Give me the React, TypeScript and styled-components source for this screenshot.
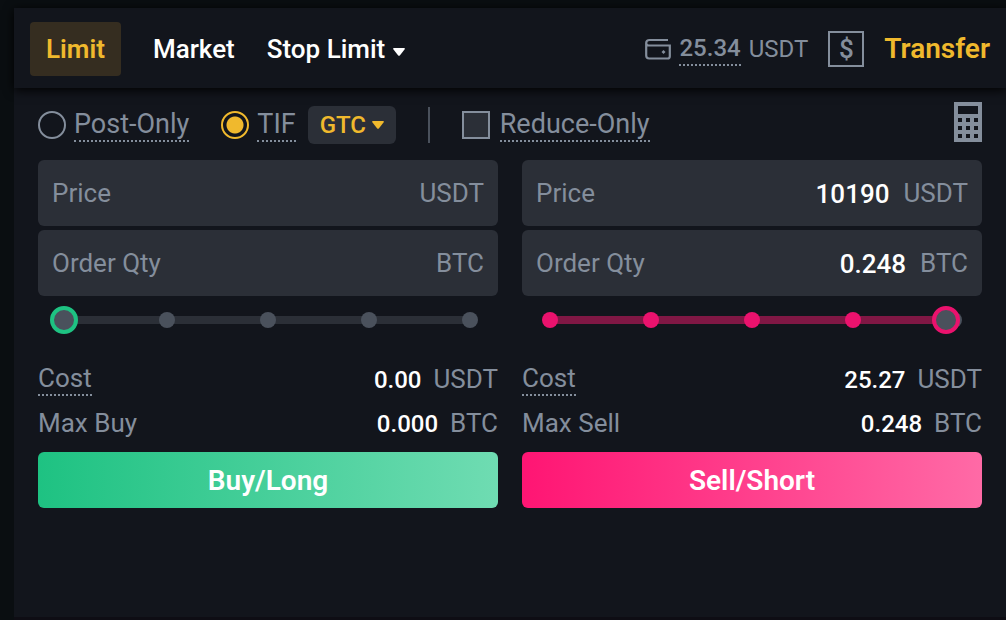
import React, { useId, useState } from "react";
import styled, { createGlobalStyle } from "styled-components";

const color = {
  page: "#0a0e11",
  panel: "#12151c",
  field: "#2b2f37",
  muted: "#848e9c",
  dot: "#4a515c",
  yellow: "#f0b92d",
  green: "#1ec282",
  greenLight: "#6fdcb2",
  pink: "#ff1573",
  pinkLight: "#ff6aa6",
  pinkDot: "#ea126d",
  pinkTrack: "#801744",
};

const GlobalStyle = createGlobalStyle`
  *, *::before, *::after { box-sizing: border-box; }
  body {
    margin: 0;
    background: ${color.page};
    color: ${color.muted};
    font-family: Roboto, "Liberation Sans", sans-serif;
    font-size: 26px;
    line-height: 32px;
  }
  button, input, select { margin: 0; font: inherit; color: inherit; }
`;

const Page = styled.main`
  min-height: 100vh;
  padding: 8px 0 0 14px;
  display: flex;
`;

const Panel = styled.section`
  flex: 1;
  min-width: 0;
  background: ${color.panel};
  border-bottom: 3px solid #0e0d14;
`;

const Header = styled.header`
  display: flex;
  align-items: center;
  justify-content: space-between;
  height: 80px;
  padding: 2px 16px 0;
  background: ${color.panel};
  box-shadow: 0 2px 10px #000;
`;

const Tabs = styled.nav`
  display: flex;
  align-items: center;
  gap: 32px;
`;

const Tab = styled.button<{ $active?: boolean }>`
  display: flex;
  align-items: center;
  gap: 8px;
  height: 54px;
  padding: 0 ${(p) => (p.$active ? 16 : 0)}px;
  border: 0;
  border-radius: 4px;
  background: ${(p) => (p.$active ? "#352d20" : "transparent")};
  color: ${(p) => (p.$active ? color.yellow : "#fff")};
  font-weight: ${(p) => (p.$active ? 600 : 500)};
  white-space: nowrap;
  > svg { margin-top: 6px; }
`;

const Account = styled.div`
  display: flex;
  align-items: center;
  gap: 20px;
`;

const Balance = styled.div`
  display: flex;
  align-items: center;
  gap: 8px;
  font-size: 24px;
`;

const Hint = styled.span`
  border-bottom: 2px dotted ${color.muted};
`;

const BalanceHint = styled(Hint)`
  font-weight: 500;
`;

const UnitButton = styled.button`
  width: 36px;
  height: 36px;
  padding: 0;
  border: 2px solid ${color.muted};
  background: transparent;
  font-weight: 500;
  line-height: 28px;
`;

const TransferLink = styled.a`
  color: ${color.yellow};
  font-size: 28px;
  font-weight: 600;
  text-decoration: none;
`;

const Body = styled.div`
  padding: 0 24px;
`;

const Options = styled.div`
  display: flex;
  align-items: center;
  height: 72px;
  padding-top: 2px;
  font-size: 27px;
`;

const Option = styled.label`
  display: flex;
  align-items: center;
  gap: 8px;
  margin-right: 32px;
  white-space: nowrap;
`;

const TifOption = styled(Option)`
  margin-right: 12px;
`;

const CheckOption = styled(Option)`
  gap: 10px;
`;

const Radio = styled.input`
  appearance: none;
  width: 28px;
  height: 28px;
  border: 2px solid ${color.muted};
  border-radius: 50%;
  &:checked {
    border-color: ${color.yellow};
    background: radial-gradient(circle, ${color.yellow} 8px, transparent 9px);
  }
`;

const Checkbox = styled.input`
  appearance: none;
  width: 28px;
  height: 28px;
  border: 2px solid ${color.muted};
  background: ${color.field};
  &:checked { background: ${color.yellow}; }
`;

const SelectBox = styled.div`
  display: grid;
  align-items: center;
  width: 88px;
  height: 38px;
  border-radius: 6px;
  background: ${color.field};
  color: ${color.yellow};
  > * { grid-area: 1 / 1; }
  > svg { justify-self: end; margin-right: 12px; pointer-events: none; }
`;

const Select = styled.select`
  appearance: none;
  width: 100%;
  height: 38px;
  padding: 0 12px;
  border: 0;
  background: transparent;
  font-size: 24px;
  font-weight: 500;
`;

const Divider = styled.span`
  width: 2px;
  height: 36px;
  margin: 0 32px;
  background: #4a515c;
`;

const IconButton = styled.button`
  display: flex;
  align-self: flex-start;
  margin: 12px 0 0 auto;
  padding: 0;
  border: 0;
  background: transparent;
`;

const Sides = styled.div`
  display: grid;
  grid-template-columns: 1fr 1fr;
  gap: 24px;
`;

const Side = styled.form`
  display: flex;
  flex-direction: column;
  min-width: 0;
`;

const Field = styled.label`
  display: flex;
  align-items: center;
  height: 66px;
  padding: 0 14px;
  border-radius: 6px;
  background: ${color.field};
  white-space: nowrap;
  & + & { margin-top: 4px; }
`;

const FieldInput = styled.input`
  flex: 1;
  min-width: 0;
  margin-right: 14px;
  padding: 2px 0 0;
  border: 0;
  outline: 0;
  background: transparent;
  color: #fff;
  font-weight: 500;
  text-align: right;
`;

const Slider = styled.div`
  display: grid;
  align-items: center;
  height: 48px;
  padding: 0 20px;
  > * { grid-area: 1 / 1; }
`;

const Marks = styled.div<{ $filled: boolean }>`
  display: flex;
  justify-content: space-between;
  background: linear-gradient(
    transparent 4px,
    ${(p) => (p.$filled ? color.pinkTrack : color.field)} 4px 12px,
    transparent 12px
  ) no-repeat 8px 0 / calc(100% - 16px) 16px;
`;

const Mark = styled.span<{ $on: boolean }>`
  width: 16px;
  height: 16px;
  border-radius: 50%;
  background: ${(p) => (p.$on ? color.pinkDot : color.dot)};
`;

const Range = styled.input<{ $ring: string }>`
  appearance: none;
  height: 28px;
  margin: 0 2px 0 -8px;
  background: transparent;
  z-index: 1;
  &::-webkit-slider-thumb {
    appearance: none;
    width: 28px;
    height: 28px;
    border: 4px solid ${(p) => p.$ring};
    border-radius: 50%;
    background: ${color.dot};
  }
`;

const Summary = styled.dl`
  margin: 13px 0 7px;
`;

const SummaryRow = styled.div`
  display: flex;
  align-items: center;
  justify-content: space-between;
  height: 44px;
`;

const Term = styled.dt`
  display: flex;
`;

const Amount = styled.dd`
  display: flex;
  align-items: center;
  gap: 12px;
  margin: 0;
`;

const Value = styled.span`
  padding-top: 2px;
  color: #fff;
  font-size: 24px;
  font-weight: 500;
`;

const Submit = styled.button<{ $from: string; $to: string }>`
  height: 56px;
  padding: 2px 0 0;
  border: 0;
  border-radius: 6px;
  background: linear-gradient(90deg, ${(p) => p.$from}, ${(p) => p.$to});
  color: #fff;
  font-size: 28px;
  font-weight: 600;
`;

const Caret = () => (
  <svg width="12" height="8" viewBox="0 0 12 8" fill="currentColor" aria-hidden="true">
    <path d="M1 0H11Q12.500 0 11.500 1.500L7 7.300Q6 8.400 5 7.300L.5 1.500Q-.5 0 1 0Z" />
  </svg>
);

const WalletIcon = () => (
  <svg width="26" height="22" viewBox="0 0 26 22" fill="none" stroke="currentColor" strokeWidth="2.200" aria-hidden="true">
    <path d="M23 2H4.500Q1.200 2 1.200 5v12.500q0 3 3 3H22.500q2.300 0 2.300-2.300V7.500H3.500Q1.200 7.300 1.200 5" />
    <path d="M18.500 12l2 2-2 2-2-2Z" fill="currentColor" stroke="none" />
  </svg>
);

const CalculatorIcon = () => (
  <svg width="28" height="40" viewBox="0 0 28 40" aria-hidden="true">
    <path fill="currentColor" d="M0 0h28v40H0Z" />
    <path fill={color.panel} d="M4 4h20v8H4Z" />
    {[16, 24, 32].map((y) =>
      [4, 12, 20].map((x) => (
        <rect key={`${x}-${y}`} x={x} y={y} width="4" height="4" fill={color.panel} />
      ))
    )}
  </svg>
);

type SideProps = {
  kind: "buy" | "sell";
  price: string;
  qty: string;
  percent: number;
  cost: string;
  max: string;
};

function OrderSide({ kind, price, qty, percent, cost, max }: SideProps) {
  const id = useId();
  const [value, setValue] = useState(percent);
  const buy = kind === "buy";
  return (
    <Side onSubmit={(e) => e.preventDefault()}>
      <Field htmlFor={`${id}-price`}>
        <span>Price</span>
        <FieldInput id={`${id}-price`} defaultValue={price} />
        <span>USDT</span>
      </Field>
      <Field htmlFor={`${id}-qty`}>
        <span>Order Qty</span>
        <FieldInput id={`${id}-qty`} defaultValue={qty} />
        <span>BTC</span>
      </Field>
      <Slider>
        <Marks $filled={!buy}>
          {[0, 25, 50, 75, 100].map((m) => (
            <Mark key={m} $on={!buy && m < value} />
          ))}
        </Marks>
        <Range
          type="range"
          min={0}
          max={100}
          value={value}
          onChange={(e) => setValue(Number(e.target.value))}
          aria-label={buy ? "Buy amount" : "Sell amount"}
          $ring={buy ? color.green : color.pinkDot}
        />
      </Slider>
      <Summary>
        <SummaryRow>
          <Term><Hint>Cost</Hint></Term>
          <Amount><Value>{cost}</Value><span>USDT</span></Amount>
        </SummaryRow>
        <SummaryRow>
          <Term>{buy ? "Max Buy" : "Max Sell"}</Term>
          <Amount><Value>{max}</Value><span>BTC</span></Amount>
        </SummaryRow>
      </Summary>
      <Submit
        type="submit"
        $from={buy ? color.green : color.pink}
        $to={buy ? color.greenLight : color.pinkLight}
      >
        {buy ? "Buy/Long" : "Sell/Short"}
      </Submit>
    </Side>
  );
}

export default function App() {
  return (
    <>
      <GlobalStyle />
      <Page>
        <Panel>
          <Header>
            <Tabs>
              <Tab type="button" $active>Limit</Tab>
              <Tab type="button">Market</Tab>
              <Tab type="button">Stop Limit <Caret /></Tab>
            </Tabs>
            <Account>
              <Balance>
                <WalletIcon />
                <BalanceHint>25.34</BalanceHint>
                <span>USDT</span>
              </Balance>
              <UnitButton type="button">$</UnitButton>
              <TransferLink href="#transfer">Transfer</TransferLink>
            </Account>
          </Header>
          <Body>
            <Options>
              <Option>
                <Radio type="radio" name="mode" value="post" />
                <Hint>Post-Only</Hint>
              </Option>
              <TifOption>
                <Radio type="radio" name="mode" value="tif" defaultChecked />
                <Hint>TIF</Hint>
              </TifOption>
              <SelectBox>
                <Select aria-label="Time in force" defaultValue="GTC">
                  <option>GTC</option>
                  <option>IOC</option>
                  <option>FOK</option>
                </Select>
                <Caret />
              </SelectBox>
              <Divider />
              <CheckOption>
                <Checkbox type="checkbox" />
                <Hint>Reduce-Only</Hint>
              </CheckOption>
              <IconButton type="button" aria-label="Calculator">
                <CalculatorIcon />
              </IconButton>
            </Options>
            <Sides>
              <OrderSide kind="buy" price="" qty="" percent={0} cost="0.00" max="0.000" />
              <OrderSide kind="sell" price="10190" qty="0.248" percent={100} cost="25.27" max="0.248" />
            </Sides>
          </Body>
        </Panel>
      </Page>
    </>
  );
}
